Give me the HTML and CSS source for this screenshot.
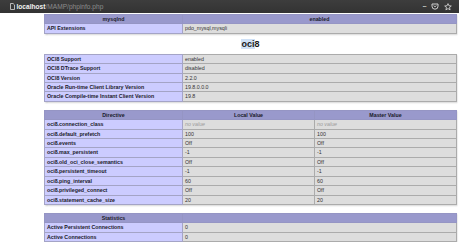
FILE: index.html
```html
<!DOCTYPE html>
<html>
<head>
<meta charset="utf-8">
<link rel="stylesheet" href="styles.css">
</head>
<body>
<div class="bar">
  <div class="url">
    <svg class="doc" width="5" height="7" viewBox="0 0 5 7"><path d="M0.5 0.5h2.6l1.4 1.4v4.6h-4z" fill="none" stroke="#d8d8d8" stroke-width="0.8"/></svg>
    <span class="host">localhost</span><span class="path">/MAMP/phpinfo.php</span>
  </div>
  <div class="tools">
    <span class="dots">•••</span>
    <svg width="8" height="7" viewBox="0 0 8 7"><path d="M1 1h6v2.2a3 3 0 0 1-6 0z" fill="none" stroke="#e0e0e0" stroke-width="0.9"/><path d="M2.6 2.6l1.4 1.2 1.4-1.2" fill="none" stroke="#e0e0e0" stroke-width="0.8"/></svg>
    <svg width="8" height="8" viewBox="0 0 8 8"><path d="M4 0.6l1 2.2 2.3 0.2-1.8 1.5 0.6 2.3L4 5.6 1.9 6.8l0.6-2.3L0.7 3l2.3-0.2z" fill="none" stroke="#e0e0e0" stroke-width="0.8" stroke-linejoin="round"/></svg>
  </div>
</div>
<div class="page">
  <table class="t1">
    <tr class="h"><th class="c1">mysqlnd</th><th>enabled</th></tr>
    <tr><td class="e">API Extensions</td><td class="v">pdo_mysql,mysqli</td></tr>
  </table>

  <h2 class="title"><span class="sel">oci</span>8</h2>

  <table class="t2">
    <tr><td class="e c1">OCI8 Support</td><td class="v">enabled</td></tr>
    <tr><td class="e">OCI8 DTrace Support</td><td class="v">disabled</td></tr>
    <tr><td class="e">OCI8 Version</td><td class="v">2.2.0</td></tr>
    <tr><td class="e">Oracle Run-time Client Library Version</td><td class="v">19.8.0.0.0</td></tr>
    <tr><td class="e">Oracle Compile-time Instant Client Version</td><td class="v">19.8</td></tr>
  </table>

  <table class="t3">
    <tr class="h"><th class="c1">Directive</th><th class="c2">Local Value</th><th>Master Value</th></tr>
    <tr><td class="e">oci8.connection_class</td><td class="v"><i class="nv">no value</i></td><td class="v"><i class="nv">no value</i></td></tr>
    <tr><td class="e">oci8.default_prefetch</td><td class="v">100</td><td class="v">100</td></tr>
    <tr><td class="e">oci8.events</td><td class="v">Off</td><td class="v">Off</td></tr>
    <tr><td class="e">oci8.max_persistent</td><td class="v">-1</td><td class="v">-1</td></tr>
    <tr><td class="e">oci8.old_oci_close_semantics</td><td class="v">Off</td><td class="v">Off</td></tr>
    <tr><td class="e">oci8.persistent_timeout</td><td class="v">-1</td><td class="v">-1</td></tr>
    <tr><td class="e">oci8.ping_interval</td><td class="v">60</td><td class="v">60</td></tr>
    <tr><td class="e">oci8.privileged_connect</td><td class="v">Off</td><td class="v">Off</td></tr>
    <tr><td class="e">oci8.statement_cache_size</td><td class="v">20</td><td class="v">20</td></tr>
  </table>

  <table class="t4">
    <tr class="h"><th class="c1">Statistics</th><th></th></tr>
    <tr><td class="e">Active Persistent Connections</td><td class="v">0</td></tr>
    <tr><td class="e">Active Connections</td><td class="v">0</td></tr>
  </table>
</div>
</body>
</html>
```
FILE: styles.css
```css
html, body {
  margin: 0;
  padding: 0;
  background: #ffffff;
  font-family: "Liberation Sans", Arial, sans-serif;
  color: #222;
}

.bar {
  width: 459px;
  height: 13px;
  background: linear-gradient(#3d3d3d, #333333);
  display: flex;
  align-items: center;
  justify-content: space-between;
  box-sizing: border-box;
  padding: 0 7px 0 10px;
}

.url {
  display: flex;
  align-items: center;
  font-size: 6.6px;
  line-height: 8px;
}

.doc {
  margin-right: 1.5px;
}

.host {
  color: #f2f2f2;
  font-weight: bold;
}

.path {
  color: #8c8c8c;
}

.tools {
  display: flex;
  align-items: center;
  gap: 5px;
  color: #e0e0e0;
}

.dots {
  font-size: 4px;
  letter-spacing: -0.3px;
  line-height: 6px;
}

.page {
  margin-left: 44px;
  width: 413px;
  padding-top: 1px;
}

table {
  width: 413px;
  border-collapse: collapse;
  table-layout: fixed;
  font-size: 5.3px;
  box-shadow: 0.5px 1px 1.5px #cfcfcf;
}

td, th {
  border: 1px solid #a6a6b4;
  padding: 0 2px;
  height: 8.4px;
  line-height: 8.4px;
  white-space: nowrap;
  overflow: hidden;
  text-align: left;
}

.h th {
  background: #9999cc;
  font-weight: bold;
  text-align: center;
  border-color: #9595c4;
  height: 8.4px;
  color: #1a1a2a;
}

.e {
  background: #ccccff;
  font-weight: bold;
  border-color: #a4a4c6;
  color: #1a1a2a;
}

.v {
  background: #dddddd;
  border-color: #ababab;
  color: #333;
}

.nv {
  color: #9a9a9a;
}

.c1 {
  width: 133px;
}

.c2 {
  width: 127px;
}

.title {
  margin: 0;
  padding: 5px 0 4px;
  text-align: center;
  font-size: 9px;
  line-height: 11px;
  font-weight: bold;
  color: #1a1a1a;
}

.sel {
  background: #cfe1f7;
}

.t2 {
  margin-bottom: 8px;
}

.t3 {
  margin-bottom: 8px;
}
```
